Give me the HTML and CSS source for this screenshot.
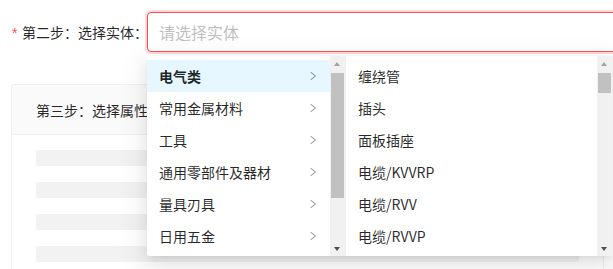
FILE: index.html
```html
<!DOCTYPE html>
<html lang="zh">
<head>
<meta charset="utf-8">
<link rel="stylesheet" href="styles.css">
</head>
<body>
<div class="page">
  <div class="form-row">
    <label class="label"><span class="req">*</span>第二步：选择实体：</label>
    <div class="picker">请选择实体</div>
  </div>

  <div class="card">
    <div class="card-head">第三步：选择属性</div>
    <div class="card-body">
      <div class="bar"></div>
      <div class="bar"></div>
      <div class="bar"></div>
      <div class="bar"></div>
    </div>
  </div>

  <div class="dropdown">
    <div class="menu">
      <ul class="list list-1">
        <li class="item active">电气类<svg class="chev" viewBox="64 64 896 896"><path d="M765.7 486.8L314.9 134.7A7.97 7.97 0 00302 141v77.3c0 4.9 2.3 9.6 6.1 12.6l360 281.1-360 281.1c-3.9 3-6.1 7.7-6.1 12.6V883c0 6.7 7.7 10.4 12.9 6.3l450.8-352.1a31.96 31.960 000-50.4z"/></svg></li>
        <li class="item">常用金属材料<svg class="chev" viewBox="64 64 896 896"><path d="M765.7 486.8L314.9 134.7A7.97 7.97 0 00302 141v77.3c0 4.9 2.3 9.6 6.1 12.6l360 281.1-360 281.1c-3.9 3-6.1 7.7-6.1 12.6V883c0 6.7 7.7 10.4 12.9 6.3l450.8-352.1a31.96 31.960 000-50.4z"/></svg></li>
        <li class="item">工具<svg class="chev" viewBox="64 64 896 896"><path d="M765.7 486.8L314.9 134.7A7.97 7.97 0 00302 141v77.3c0 4.9 2.3 9.6 6.1 12.6l360 281.1-360 281.1c-3.9 3-6.1 7.7-6.1 12.6V883c0 6.7 7.7 10.4 12.9 6.3l450.8-352.1a31.96 31.960 000-50.4z"/></svg></li>
        <li class="item">通用零部件及器材<svg class="chev" viewBox="64 64 896 896"><path d="M765.7 486.8L314.9 134.7A7.97 7.97 0 00302 141v77.3c0 4.9 2.3 9.6 6.1 12.6l360 281.1-360 281.1c-3.9 3-6.1 7.7-6.1 12.6V883c0 6.7 7.7 10.4 12.9 6.3l450.8-352.1a31.96 31.960 000-50.4z"/></svg></li>
        <li class="item">量具刃具<svg class="chev" viewBox="64 64 896 896"><path d="M765.7 486.8L314.9 134.7A7.97 7.97 0 00302 141v77.3c0 4.9 2.3 9.6 6.1 12.6l360 281.1-360 281.1c-3.9 3-6.1 7.7-6.1 12.6V883c0 6.7 7.7 10.4 12.9 6.3l450.8-352.1a31.96 31.960 000-50.4z"/></svg></li>
        <li class="item">日用五金<svg class="chev" viewBox="64 64 896 896"><path d="M765.7 486.8L314.9 134.7A7.97 7.97 0 00302 141v77.3c0 4.9 2.3 9.6 6.1 12.6l360 281.1-360 281.1c-3.9 3-6.1 7.7-6.1 12.6V883c0 6.7 7.7 10.4 12.9 6.3l450.8-352.1a31.96 31.960 000-50.4z"/></svg></li>
      </ul>
      <div class="sbar">
        <span class="btn up off"></span>
        <span class="thumb thumb-1"></span>
        <span class="btn down"></span>
      </div>
    </div>
    <div class="menu">
      <ul class="list list-2">
        <li class="item">缠绕管</li>
        <li class="item">插头</li>
        <li class="item">面板插座</li>
        <li class="item">电缆/KVVRP</li>
        <li class="item">电缆/RVV</li>
        <li class="item">电缆/RVVP</li>
      </ul>
      <div class="sbar">
        <span class="btn up off"></span>
        <span class="thumb thumb-2"></span>
        <span class="btn down"></span>
      </div>
    </div>
  </div>
</div>
</body>
</html>
```

FILE: styles.css
```css
html, body {
  margin: 0;
  padding: 0;
  background: #fff;
  overflow: hidden;
}

body {
  font-family: "Noto Sans CJK SC", "Noto Sans", sans-serif;
  color: rgba(0, 0, 0, 0.85);
}

.page {
  position: relative;
  width: 613px;
  height: 269px;
  padding-top: 12px;
  box-sizing: border-box;
}

.form-row {
  display: flex;
  align-items: center;
  height: 40px;
}

.label {
  width: 135px;
  flex-shrink: 0;
  padding-left: 12px;
  font-size: 14px;
  white-space: nowrap;
  color: rgba(0, 0, 0, 0.85);
}

.req {
  display: inline-block;
  width: 10px;
  color: #ff4d4f;
  font-family: "Liberation Sans", sans-serif;
  font-size: 14px;
}

.picker {
  flex-shrink: 0;
  width: 520px;
  height: 40px;
  box-sizing: border-box;
  border: 1px solid #ff4d4f;
  border-radius: 4px;
  box-shadow: 0 0 0 2px rgba(255, 77, 79, 0.2);
  padding: 0 11px;
  display: flex;
  align-items: center;
  font-size: 16px;
  color: #bfbfbf;
  background: #fff;
}

.card {
  margin: 32px 0 0 11px;
  width: 591px;
  border: 1px solid #f0f0f0;
  border-radius: 2px;
  background: #fff;
}

.card-head {
  height: 49px;
  padding: 0 24px;
  display: flex;
  align-items: center;
  font-size: 14px;
  background: #fafafa;
  border-bottom: 1px solid #f0f0f0;
}

.card-body {
  padding: 15px 24px 0;
}

.bar {
  height: 16px;
  margin-bottom: 16px;
  border-radius: 2px;
  background: #f2f2f2;
}

.dropdown {
  position: absolute;
  top: 56px;
  left: 147px;
  display: flex;
  background: #fff;
  border-radius: 2px;
  box-shadow: 0 3px 6px -4px rgba(0, 0, 0, 0.12), 0 6px 16px 0 rgba(0, 0, 0, 0.08), 0 9px 28px 8px rgba(0, 0, 0, 0.05);
}

.menu {
  display: flex;
  height: 200px;
  border-right: 1px solid #f0f0f0;
}

.list {
  list-style: none;
  margin: 0;
  padding: 4px 0;
  overflow: hidden;
}

.list-1 { width: 183px; }
.list-2 { width: 251px; }

.item {
  position: relative;
  height: 32px;
  padding: 0 12px;
  display: flex;
  align-items: center;
  font-size: 14px;
  line-height: 22px;
  white-space: nowrap;
  color: rgba(0, 0, 0, 0.85);
}

.item.active {
  background: #e6f7ff;
  font-weight: 600;
}

.chev {
  position: absolute;
  right: 12px;
  top: 11px;
  width: 10px;
  height: 10px;
  fill: rgba(0, 0, 0, 0.45);
}

.sbar {
  position: relative;
  width: 15px;
  background: #f1f1f1;
}

.btn {
  position: absolute;
  left: 0;
  width: 15px;
  height: 15px;
}

.btn.up { top: 0; }
.btn.down { bottom: 0; }

.btn::after {
  content: "";
  position: absolute;
  left: 4px;
  width: 0;
  height: 0;
  border-left: 3.5px solid transparent;
  border-right: 3.5px solid transparent;
}

.btn.up::after {
  top: 6px;
  border-bottom: 4px solid #505050;
}

.btn.down::after {
  top: 6px;
  border-top: 4px solid #505050;
}

.btn.up.off::after {
  border-bottom-color: #a3a3a3;
}

.thumb {
  position: absolute;
  left: 1px;
  width: 13px;
  top: 17px;
  background: #c1c1c1;
}

.thumb-1 { height: 125px; }
.thumb-2 { height: 20px; }
```
